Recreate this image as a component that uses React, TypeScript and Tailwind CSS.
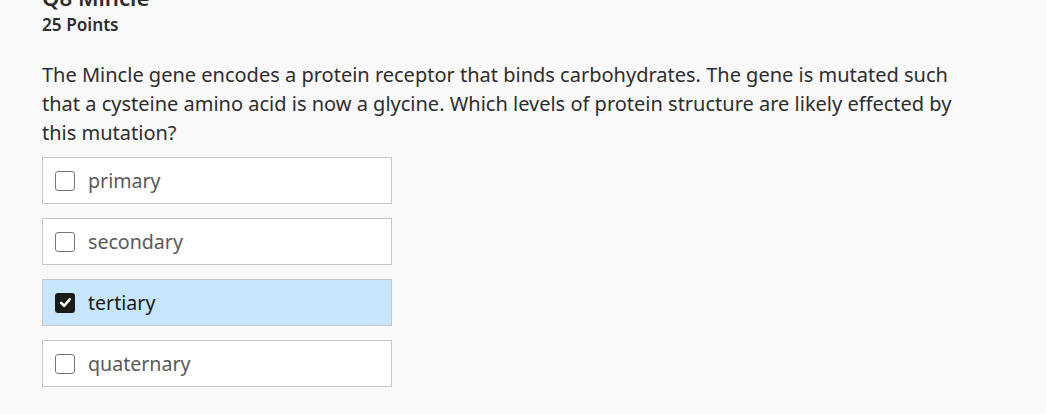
import React from 'react';

const options = [
  { label: 'primary', checked: false },
  { label: 'secondary', checked: false },
  { label: 'tertiary', checked: true },
  { label: 'quaternary', checked: false },
];

export default function App() {
  return (
    <div className="min-h-[414px] w-[1046px] overflow-hidden bg-[#f9f9f9] pl-[42px] text-[#2d3b45]" style={{ fontFamily: '"Noto Sans", "Open Sans", sans-serif' }}>
      <h2 className="-mt-[17px] text-[22.2px] font-semibold leading-[30px] text-[#2d2d2d]">Q8 Mincle</h2>
      <div className="mt-[1px] text-[17.2px] font-semibold leading-[22px] text-[#2d2d2d]">25 Points</div>
      <p className="mt-[24px] w-[930px] text-[20px] leading-[29px] text-[#2d2d2d]">
        The Mincle gene encodes a protein receptor that binds carbohydrates. The gene is mutated such that a cysteine amino acid is now a glycine. Which levels of protein structure are likely effected by this mutation?
      </p>
      <div className="mt-[10px] flex w-[350px] flex-col gap-[14px]">
        {options.map((o) => (
          <label
            key={o.label}
            className={`flex h-[47px] items-center gap-[13px] border border-[#c7c7c7] pl-[12px] ${o.checked ? 'bg-[#c7e6fc] text-[#1a1a1a]' : 'bg-white text-[#5a5a5a]'}`}
          >
            {o.checked ? (
              <span className="flex h-[20px] w-[20px] items-center justify-center rounded-[3px] bg-[#1a1a1a]">
                <svg width="13" height="13" viewBox="0 0 12 12" fill="none">
                  <path d="M2 6.3L4.8 9L10 3" stroke="white" strokeWidth="2.4" strokeLinecap="round" strokeLinejoin="round" />
                </svg>
              </span>
            ) : (
              <span className="h-[20px] w-[20px] rounded-[3px] border border-[#777] bg-white" />
            )}
            <span className="text-[19.6px] leading-[24px]">{o.label}</span>
          </label>
        ))}
      </div>
    </div>
  );
}
